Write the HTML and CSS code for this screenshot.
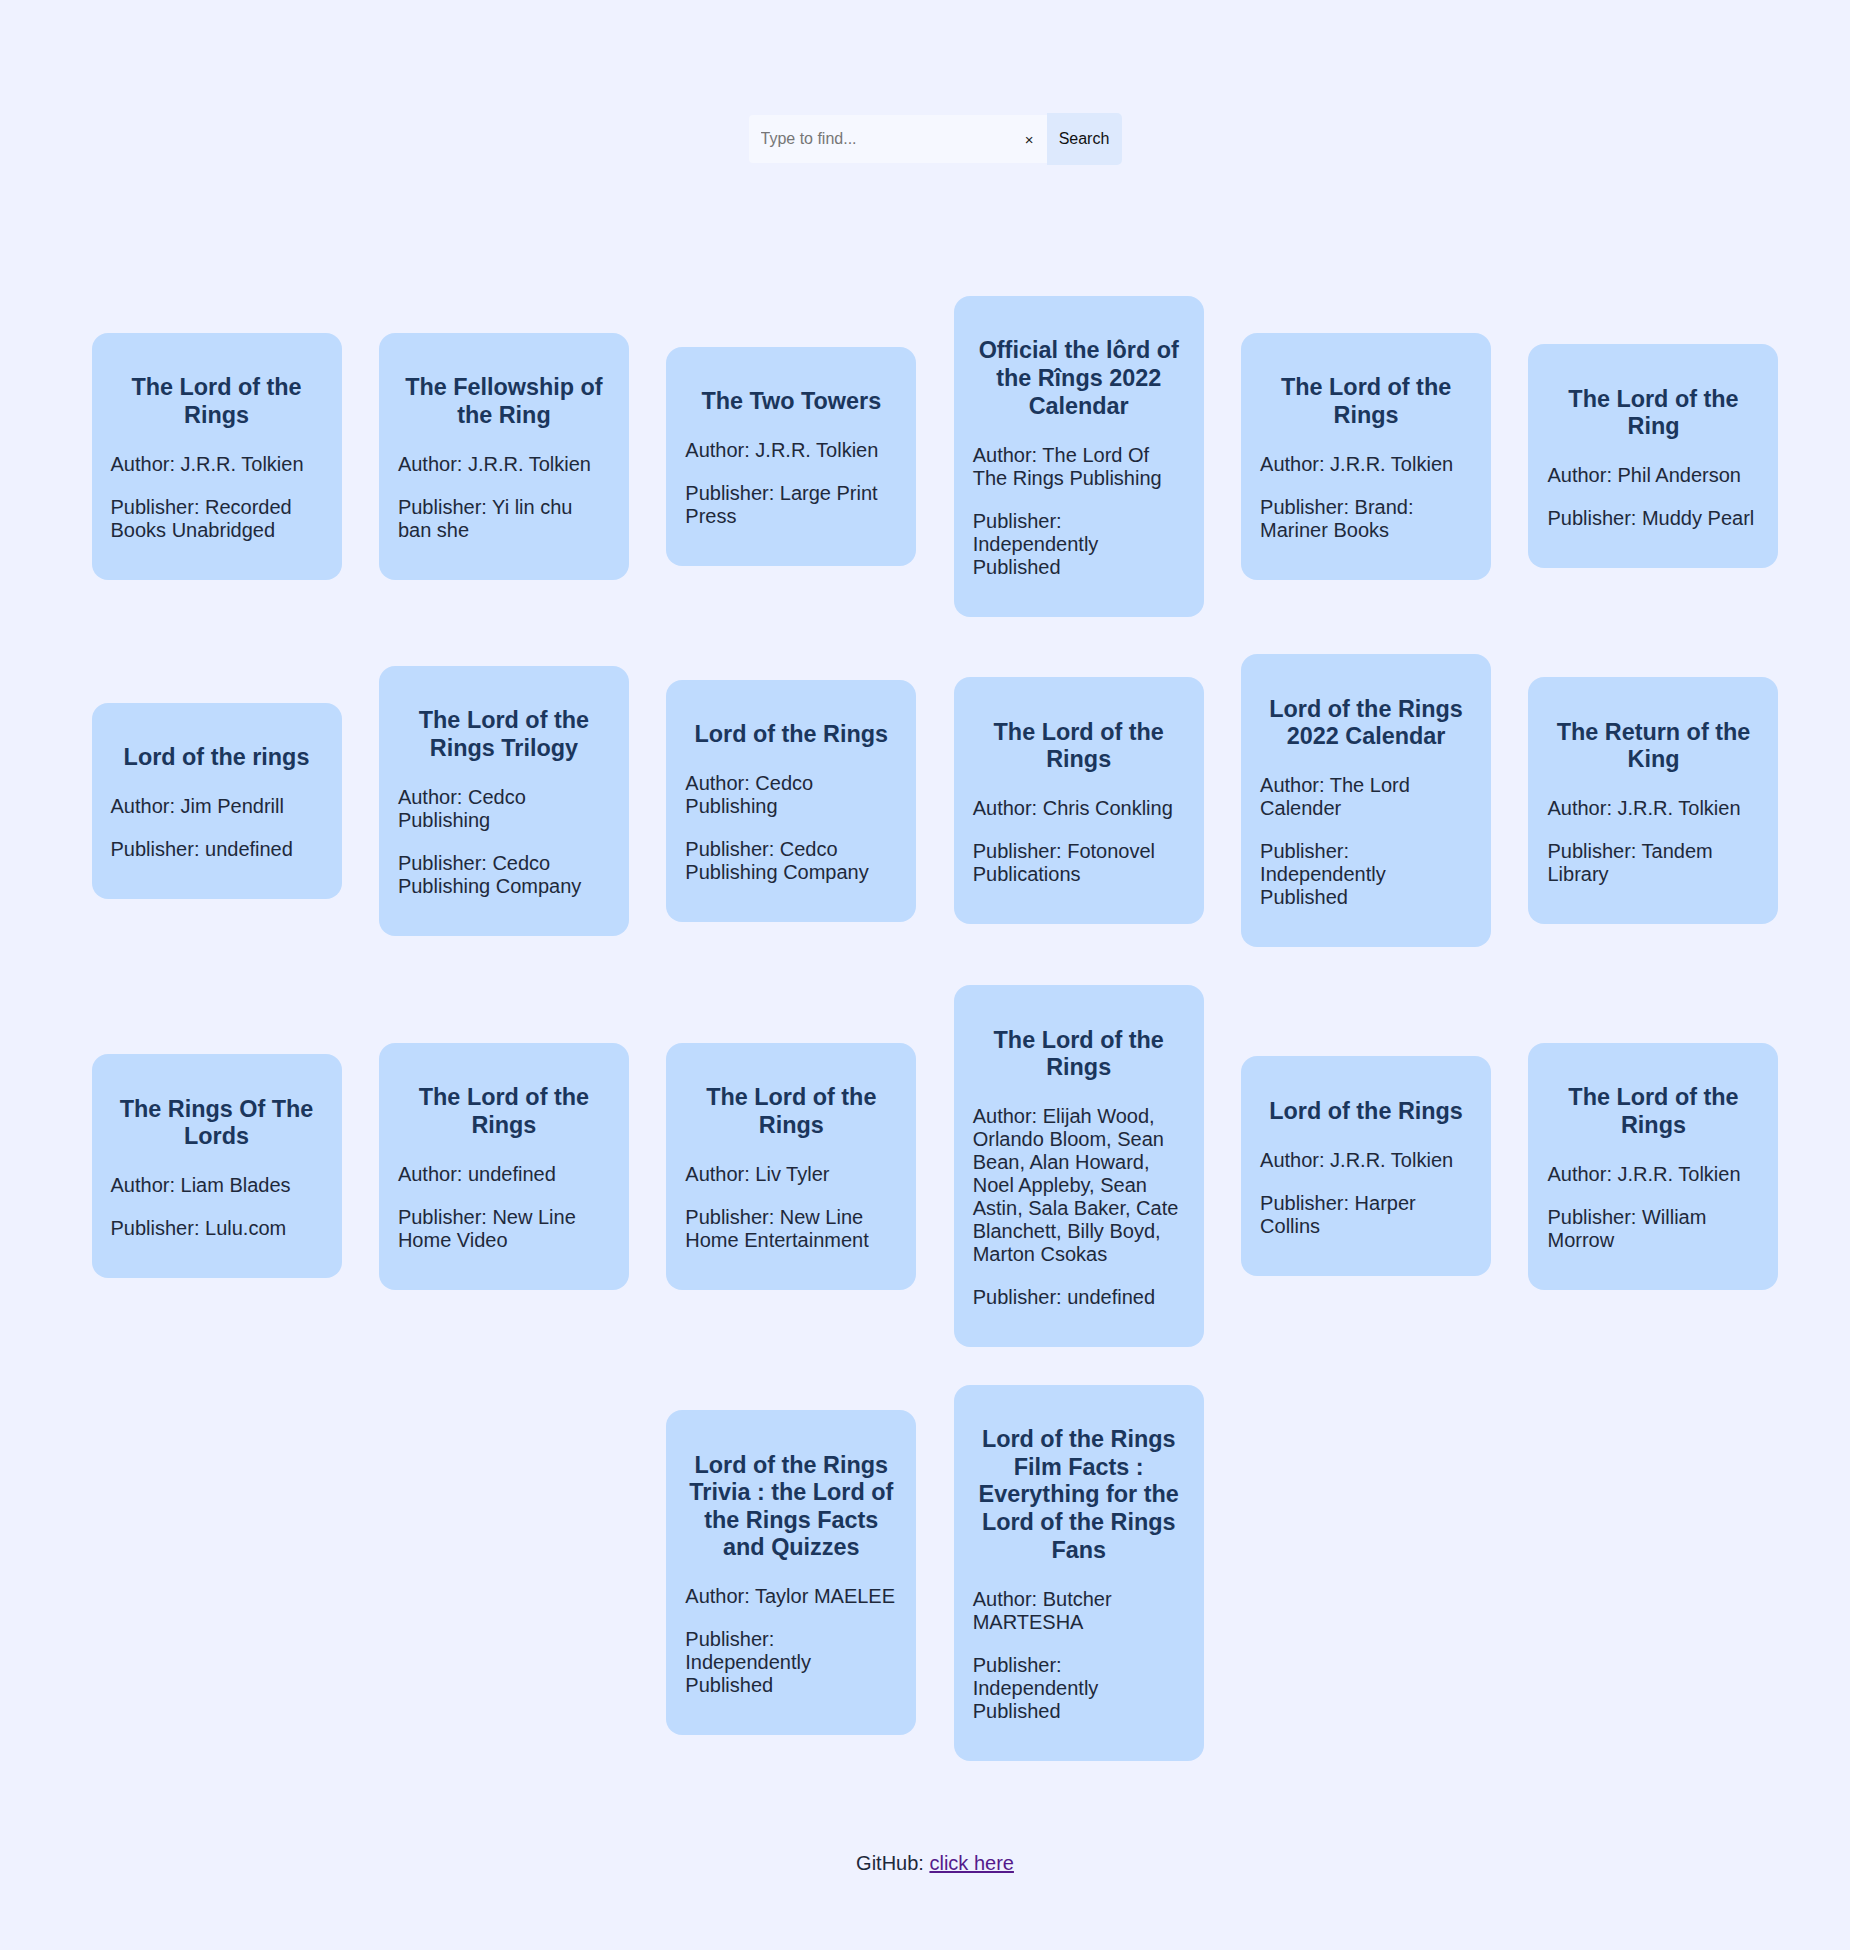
FILE: index.html
```html
<!DOCTYPE html>
<html lang="en">
<head>
<meta charset="utf-8">
<title>Book Finder</title>
<link rel="stylesheet" href="styles.css">
</head>
<body>
<div class="page">
  <header class="header">
    <form class="search">
      <div class="search-field">
        <input class="search-input" type="text" placeholder="Type to find...">
        <span class="search-clear">×</span>
      </div>
      <button class="search-btn" type="button">Search</button>
    </form>
  </header>

  <main class="cards">
    <div class="card"><h3>The Lord of the Rings</h3><p>Author: J.R.R. Tolkien</p><p>Publisher: Recorded Books Unabridged</p></div>
    <div class="card"><h3>The Fellowship of the Ring</h3><p>Author: J.R.R. Tolkien</p><p>Publisher: Yi lin chu ban she</p></div>
    <div class="card"><h3>The Two Towers</h3><p>Author: J.R.R. Tolkien</p><p>Publisher: Large Print Press</p></div>
    <div class="card"><h3>Official the lôrd of the Rîngs 2022 Calendar</h3><p>Author: The Lord Of The Rings Publishing</p><p>Publisher: Independently Published</p></div>
    <div class="card"><h3>The Lord of the Rings</h3><p>Author: J.R.R. Tolkien</p><p>Publisher: Brand: Mariner Books</p></div>
    <div class="card"><h3>The Lord of the Ring</h3><p>Author: Phil Anderson</p><p>Publisher: Muddy Pearl</p></div>

    <div class="card"><h3>Lord of the rings</h3><p>Author: Jim Pendrill</p><p>Publisher: undefined</p></div>
    <div class="card"><h3>The Lord of the Rings Trilogy</h3><p>Author: Cedco Publishing</p><p>Publisher: Cedco Publishing Company</p></div>
    <div class="card"><h3>Lord of the Rings</h3><p>Author: Cedco Publishing</p><p>Publisher: Cedco Publishing Company</p></div>
    <div class="card"><h3>The Lord of the Rings</h3><p>Author: Chris Conkling</p><p>Publisher: Fotonovel Publications</p></div>
    <div class="card"><h3>Lord of the Rings 2022 Calendar</h3><p>Author: The Lord Calender</p><p>Publisher: Independently Published</p></div>
    <div class="card"><h3>The Return of the King</h3><p>Author: J.R.R. Tolkien</p><p>Publisher: Tandem Library</p></div>

    <div class="card"><h3>The Rings Of The Lords</h3><p>Author: Liam Blades</p><p>Publisher: Lulu.com</p></div>
    <div class="card"><h3>The Lord of the Rings</h3><p>Author: undefined</p><p>Publisher: New Line Home Video</p></div>
    <div class="card"><h3>The Lord of the Rings</h3><p>Author: Liv Tyler</p><p>Publisher: New Line Home Entertainment</p></div>
    <div class="card"><h3>The Lord of the Rings</h3><p>Author: Elijah Wood, Orlando Bloom, Sean Bean, Alan Howard, Noel Appleby, Sean Astin, Sala Baker, Cate Blanchett, Billy Boyd, Marton Csokas</p><p>Publisher: undefined</p></div>
    <div class="card"><h3>Lord of the Rings</h3><p>Author: J.R.R. Tolkien</p><p>Publisher: Harper Collins</p></div>
    <div class="card"><h3>The Lord of the Rings</h3><p>Author: J.R.R. Tolkien</p><p>Publisher: William Morrow</p></div>

    <div class="card"><h3>Lord of the Rings Trivia : the Lord of the Rings Facts and Quizzes</h3><p>Author: Taylor MAELEE</p><p>Publisher: Independently Published</p></div>
    <div class="card"><h3>Lord of the Rings Film Facts : Everything for the Lord of the Rings Fans</h3><p>Author: Butcher MARTESHA</p><p>Publisher: Independently Published</p></div>
  </main>

  <footer class="footer">
    <p>GitHub: <a class="footer-link" href="#">click here</a></p>
  </footer>
</div>
</body>
</html>
```
FILE: styles.css
```css
html, body {
  margin: 0;
  padding: 0;
  background: #eff2ff;
}

body {
  font-family: "Liberation Sans", Arial, sans-serif;
  color: #1e293b;
}

.page {
  padding-left: 20px;
  min-height: 1950px;
  box-sizing: border-box;
}

.header {
  padding-top: 113px;
}

.search {
  display: flex;
  justify-content: center;
  align-items: center;
  height: 52px;
  margin: 0;
}

.search-field {
  display: flex;
  align-items: center;
  width: 298px;
  height: 48px;
  box-sizing: border-box;
  background: #f6f8ff;
  border-radius: 4px 0 0 4px;
  padding: 0 12px;
}

.search-input {
  flex: 1;
  min-width: 0;
  border: none;
  outline: none;
  background: transparent;
  font-family: "Liberation Sans", Arial, sans-serif;
  font-size: 16px;
  color: #1e293b;
  padding: 0;
}

.search-input::placeholder {
  color: #767676;
}

.search-clear {
  font-size: 15px;
  color: #1e1e1e;
  margin-right: 1px;
  line-height: 1;
}

.search-btn {
  height: 52px;
  width: 75px;
  border: none;
  background: #dde9fd;
  border-radius: 0 5px 5px 0;
  font-family: "Liberation Sans", Arial, sans-serif;
  font-size: 16px;
  color: #111;
  padding: 0;
}

.cards {
  display: flex;
  flex-wrap: wrap;
  justify-content: center;
  align-items: center;
  column-gap: 37.4px;
  row-gap: 37.8px;
  margin-top: 131px;
}

.card {
  width: 250px;
  box-sizing: border-box;
  background: #bfdbfe;
  border-radius: 16px;
  padding: 18px 19px;
  font-size: 20px;
}

.card h3 {
  margin: 1em 0;
  font-size: 1.17em;
  line-height: 27.6px;
  font-weight: bold;
  text-align: center;
  color: #1b365c;
}

.card p {
  margin: 20px 0;
  font-size: 20px;
  color: #1e293b;
}

.footer {
  margin-top: 91px;
  text-align: center;
}

.footer p {
  margin: 0;
  font-size: 20px;
  color: #1e293b;
}

.footer-link {
  color: #551a8b;
}
```
